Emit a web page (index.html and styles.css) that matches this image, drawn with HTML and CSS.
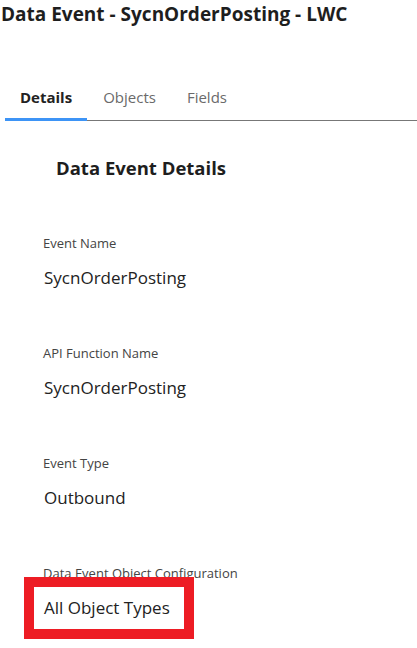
FILE: index.html
```html
<!DOCTYPE html>
<html lang="en">
<head>
<meta charset="utf-8">
<title>Data Event - SycnOrderPosting - LWC</title>
<link rel="stylesheet" href="styles.css">
</head>
<body>
  <h1 class="title">Data Event - SycnOrderPosting - LWC</h1>
  <nav class="tabs">
    <span class="tab tab-active">Details</span>
    <span class="tab">Objects</span>
    <span class="tab">Fields</span>
  </nav>
  <section class="details">
    <h2 class="details-heading">Data Event Details</h2>
    <div class="field">
      <div class="field-label">Event Name</div>
      <div class="field-value">SycnOrderPosting</div>
    </div>
    <div class="field">
      <div class="field-label">API Function Name</div>
      <div class="field-value">SycnOrderPosting</div>
    </div>
    <div class="field">
      <div class="field-label">Event Type</div>
      <div class="field-value">Outbound</div>
    </div>
    <div class="field">
      <div class="field-label">Data Event Object Configuration</div>
      <div class="field-value highlighted">All Object Types<span class="highlight-box"></span></div>
    </div>
  </section>
</body>
</html>
```

FILE: styles.css
```css
html, body {
  margin: 0;
  padding: 0;
  background: #ffffff;
}

body {
  font-family: "Open Sans", "Noto Sans", sans-serif;
  color: #222222;
  padding-bottom: 40px;
}

.title {
  margin: 0;
  padding-left: 1px;
  font-size: 19px;
  line-height: 28px;
  font-weight: 700;
  color: #1e1e1e;
  white-space: nowrap;
}

.tabs {
  display: flex;
  margin: 59px 0 0 5px;
  border-bottom: 1px solid #777777;
}

.tab {
  padding: 0 15px 11px;
  font-size: 15px;
  line-height: 20px;
  color: #6a6a6a;
  border-bottom: 3px solid transparent;
  margin-bottom: -1px;
}

.tab + .tab {
  padding-left: 16px;
}

.tab-active {
  font-weight: 700;
  color: #222222;
  border-bottom-color: #3d94f6;
}

.details {
  display: flex;
  flex-direction: column;
}

.details-heading {
  margin: 35px 0 0 56px;
  font-size: 18.5px;
  line-height: 24px;
  font-weight: 700;
  color: #1e1e1e;
}

.field {
  display: flex;
  flex-direction: column;
  gap: 14px;
  margin: 54px 0 0 43px;
}

.field-label {
  font-size: 13px;
  line-height: 18px;
  color: #444444;
}

.field-value {
  margin-left: 1px;
  font-size: 17px;
  line-height: 24px;
  color: #222222;
}

.highlighted {
  position: relative;
  align-self: flex-start;
}

.highlight-box {
  position: absolute;
  left: -20px;
  top: -19px;
  width: 150px;
  height: 42px;
  border: 10px solid #ed1c24;
}
```
